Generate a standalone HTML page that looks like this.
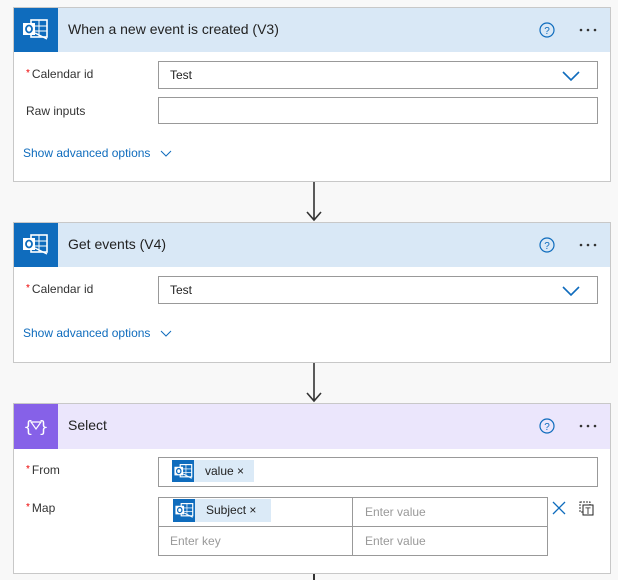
<html><head><style>
body{margin:0;width:618px;height:580px;background:#f8f8f8;font-family:"Liberation Sans",sans-serif;position:relative;overflow:hidden}
.a{position:absolute}
.card{position:absolute;left:13px;width:598px;background:#fff;border:1px solid #c8c8c8;box-sizing:border-box}
.hd{position:absolute;left:0;top:0;right:0;height:44px}
.ic{position:absolute;left:0;top:0;width:44px;height:44px}
.tt{position:absolute;left:54px;top:13px;font-size:14px;color:#222}
.lbl{position:absolute;font-size:12px;color:#333}
.lbl b{color:#e00;font-weight:normal;font-size:10px;margin-right:2px;vertical-align:2px}
.inp{position:absolute;border:1px solid #999;background:#fff;box-sizing:border-box;font-size:12px;color:#222}
.adv{position:absolute;left:9px;font-size:12px;color:#0f6cbd}
.ph{color:#999;font-size:12px;position:absolute}
.tok{position:absolute;height:22px;background:#dbeaf7;font-size:12px;color:#222;white-space:nowrap}
.tok i{position:absolute;left:0;top:0;width:22px;height:22px;background:#0f6cbd}
</style></head><body>
<svg width="0" height="0" style="position:absolute"><defs>
<g id="ol"><rect x="10" y="5" width="16" height="17" fill="none" stroke="#fff" stroke-width="1.6"/><line x1="18" y1="5" x2="18" y2="22" stroke="#fff"/><line x1="10" y1="11" x2="26" y2="11" stroke="#fff"/><line x1="10" y1="16" x2="26" y2="16" stroke="#fff"/><rect x="2" y="8" width="12" height="12" fill="#fff"/><ellipse cx="8" cy="14" rx="3" ry="3.5" fill="none" stroke="#0f6cbd" stroke-width="1.8"/><path d="M14 18l12 6" stroke="#fff" stroke-width="1.4"/></g>
<g id="hl"><circle cx="9" cy="9" r="7" fill="none" stroke="#0f6cbd" stroke-width="1.2"/><text x="9" y="13" font-size="10" text-anchor="middle" fill="#0f6cbd" font-family="Liberation Sans">?</text></g>
<g id="dt"><circle cx="2" cy="2" r="1.3" fill="#333"/><circle cx="9" cy="2" r="1.3" fill="#333"/><circle cx="16" cy="2" r="1.3" fill="#333"/></g>
</defs></svg>

<div class="card" style="top:7px;height:175px">
<div class="hd" style="background:#d9e8f6"><div class="ic" style="background:#0f6cbd"><svg width="44" height="44"><use href="#ol" transform="translate(7,7)"/></svg></div>
<div class="tt">When a new event is created (V3)</div>
<svg class="a" style="left:524px;top:13px" width="18" height="18"><use href="#hl"/></svg>
<svg class="a" style="left:565px;top:20px" width="20" height="5"><use href="#dt"/></svg></div>
<div class="lbl" style="left:12px;top:59px"><b>*</b>Calendar id</div>
<div class="inp" style="left:144px;top:53px;width:440px;height:28px;padding:6px 11px">Test</div>
<svg class="a" style="left:548px;top:62px" width="18" height="12"><path d="M1 2l8 8 8-8" fill="none" stroke="#0f6cbd" stroke-width="1.6"/></svg>
<div class="lbl" style="left:12px;top:96px">Raw inputs</div>
<div class="inp" style="left:144px;top:89px;width:440px;height:27px"></div>
<div class="adv" style="top:138px">Show advanced options</div>
<svg class="a" style="left:146px;top:142px" width="12" height="8"><path d="M1 1l5 5 5-5" fill="none" stroke="#0f6cbd"/></svg>
</div>

<svg class="a" style="left:305px;top:182px" width="18" height="40"><path d="M9 0v38M2 30l7 8 7-8" fill="none" stroke="#333" stroke-width="1.6"/></svg>

<div class="card" style="top:222px;height:141px">
<div class="hd" style="background:#d9e8f6"><div class="ic" style="background:#0f6cbd"><svg width="44" height="44"><use href="#ol" transform="translate(7,7)"/></svg></div>
<div class="tt">Get events (V4)</div>
<svg class="a" style="left:524px;top:13px" width="18" height="18"><use href="#hl"/></svg>
<svg class="a" style="left:565px;top:20px" width="20" height="5"><use href="#dt"/></svg></div>
<div class="lbl" style="left:12px;top:59px"><b>*</b>Calendar id</div>
<div class="inp" style="left:144px;top:53px;width:440px;height:28px;padding:6px 11px">Test</div>
<svg class="a" style="left:548px;top:62px" width="18" height="12"><path d="M1 2l8 8 8-8" fill="none" stroke="#0f6cbd" stroke-width="1.6"/></svg>
<div class="adv" style="top:103px">Show advanced options</div>
<svg class="a" style="left:146px;top:107px" width="12" height="8"><path d="M1 1l5 5 5-5" fill="none" stroke="#0f6cbd"/></svg>
</div>

<svg class="a" style="left:305px;top:363px" width="18" height="40"><path d="M9 0v38M2 30l7 8 7-8" fill="none" stroke="#333" stroke-width="1.6"/></svg>

<div class="card" style="top:403px;height:171px">
<div class="hd" style="background:#ebe6fc;height:45px"><div class="ic" style="background:#8661e8;height:45px"><svg width="44" height="44"><text x="22" y="28" font-size="16" text-anchor="middle" fill="#fff" font-family="DejaVu Sans">{ }</text><path d="M17 18h10l-5 7z" fill="none" stroke="#fff" stroke-width="1.2"/></svg></div>
<div class="tt">Select</div>
<svg class="a" style="left:524px;top:13px" width="18" height="18"><use href="#hl"/></svg>
<svg class="a" style="left:565px;top:20px" width="20" height="5"><use href="#dt"/></svg></div>
<div class="lbl" style="left:12px;top:59px"><b>*</b>From</div>
<div class="inp" style="left:144px;top:53px;width:440px;height:30px"></div>
<div class="tok" style="left:158px;top:56px;width:82px"><i><svg width="22" height="22"><use href="#ol" transform="translate(1,1) scale(0.72)"/></svg></i><span class="a" style="left:33px;top:4px">value ×</span></div>
<div class="lbl" style="left:12px;top:97px"><b>*</b>Map</div>
<div class="inp" style="left:144px;top:93px;width:390px;height:59px"></div>
<div class="a" style="left:145px;top:122px;width:388px;height:1px;background:#999"></div>
<div class="a" style="left:338px;top:94px;width:1px;height:58px;background:#999"></div>
<div class="tok" style="left:159px;top:95px;width:98px;height:23px"><i style="height:23px"><svg width="22" height="22"><use href="#ol" transform="translate(1,1) scale(0.72)"/></svg></i><span class="a" style="left:33px;top:4px">Subject ×</span></div>
<div class="ph" style="left:351px;top:101px">Enter value</div>
<div class="ph" style="left:156px;top:130px">Enter key</div>
<div class="ph" style="left:351px;top:130px">Enter value</div>
<svg class="a" style="left:538px;top:97px" width="14" height="14"><path d="M1 1l12 12M13 1L1 13" stroke="#0f6cbd" stroke-width="1.3"/></svg>
<svg class="a" style="left:565px;top:97px" width="16" height="16"><rect x="1" y="1" width="10" height="10" fill="none" stroke="#333" stroke-dasharray="2 1"/><rect x="4" y="4" width="10" height="10" fill="#fff" stroke="#222"/><text x="9" y="13" font-size="9" text-anchor="middle" fill="#222" font-family="Liberation Sans">T</text></svg>
</div>
<div class="a" style="left:313px;top:574px;width:2px;height:6px;background:#333"></div>
</body></html>
